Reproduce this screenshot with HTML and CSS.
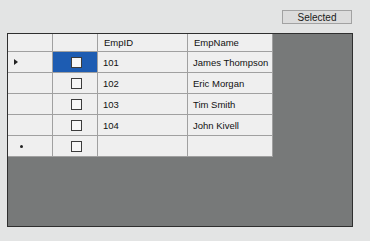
FILE: index.html
```html
<!DOCTYPE html>
<html lang="en">
<head>
  <meta charset="UTF-8">
  <title>Employees</title>
  <link rel="stylesheet" href="styles.css">
</head>
<body>
  <div class="toolbar">
    <button class="btn">Selected</button>
  </div>

  <!-- data grid -->
  <div class="grid-view">
    <div class="table">
      <div class="cell row-head"></div>
      <div class="cell"></div>
      <div class="cell head">EmpID</div>
      <div class="cell head">EmpName</div>

      <div class="cell row-head"><span class="arrow"></span></div>
      <div class="cell check active"><span class="box"></span></div>
      <div class="cell">101</div>
      <div class="cell">James Thompson</div>

      <div class="cell row-head"></div>
      <div class="cell check"><span class="box"></span></div>
      <div class="cell">102</div>
      <div class="cell">Eric Morgan</div>

      <div class="cell row-head"></div>
      <div class="cell check"><span class="box"></span></div>
      <div class="cell">103</div>
      <div class="cell">Tim Smith</div>

      <div class="cell row-head"></div>
      <div class="cell check"><span class="box"></span></div>
      <div class="cell">104</div>
      <div class="cell">John Kivell</div>

      <div class="cell row-head"><span class="star"></span></div>
      <div class="cell check"><span class="box"></span></div>
      <div class="cell"></div>
      <div class="cell"></div>
    </div>
  </div>
</body>
</html>
```

FILE: styles.css
```css
html, body {
  margin: 0;
  padding: 0;
}

* {
  box-sizing: border-box;
}

body {
  font-family: "Liberation Sans", Arial, sans-serif;
  font-size: 9.5px;
  color: #111;
  background-color: #e3e4e4;
  width: 370px;
  height: 241px;
  overflow: hidden;
}

.toolbar {
  display: flex;
  justify-content: flex-end;
  padding: 10px 18px 0 0;
}

.btn {
  width: 70px;
  height: 14px;
  padding: 0;
  font-family: inherit;
  font-size: 10px;
  color: #1a1a1a;
  background-color: #dcdcdc;
  border: 1px solid #a2a2a2;
}

.grid-view {
  margin: 9px 0 0 7px;
  width: 346px;
  height: 194px;
  background-color: #777979;
  border: 1px solid #2f2f2f;
}

.table {
  display: grid;
  grid-template-columns: 45px 45px 90px 85px;
  grid-template-rows: 18px repeat(5, 21px);
  width: 265px;
  background-color: #efefef;
}

.cell {
  display: flex;
  align-items: center;
  padding-left: 5px;
  border-right: 1px solid #a0a0a0;
  border-bottom: 1px solid #a0a0a0;
  white-space: nowrap;
}

.head {
  padding-left: 6px;
}

.check {
  justify-content: center;
  padding-left: 2px;
}

.check.active {
  background-color: #1d5cb2;
}

.box {
  width: 11px;
  height: 11px;
  background-color: #f7f7f7;
  border: 1px solid #3c3c3c;
}

.arrow {
  width: 0;
  height: 0;
  border-top: 3px solid transparent;
  border-bottom: 3px solid transparent;
  border-left: 4px solid #222;
  margin-left: 1px;
}

.star {
  width: 3px;
  height: 3px;
  border-radius: 50%;
  background-color: #222;
  margin-left: 7px;
}
```
